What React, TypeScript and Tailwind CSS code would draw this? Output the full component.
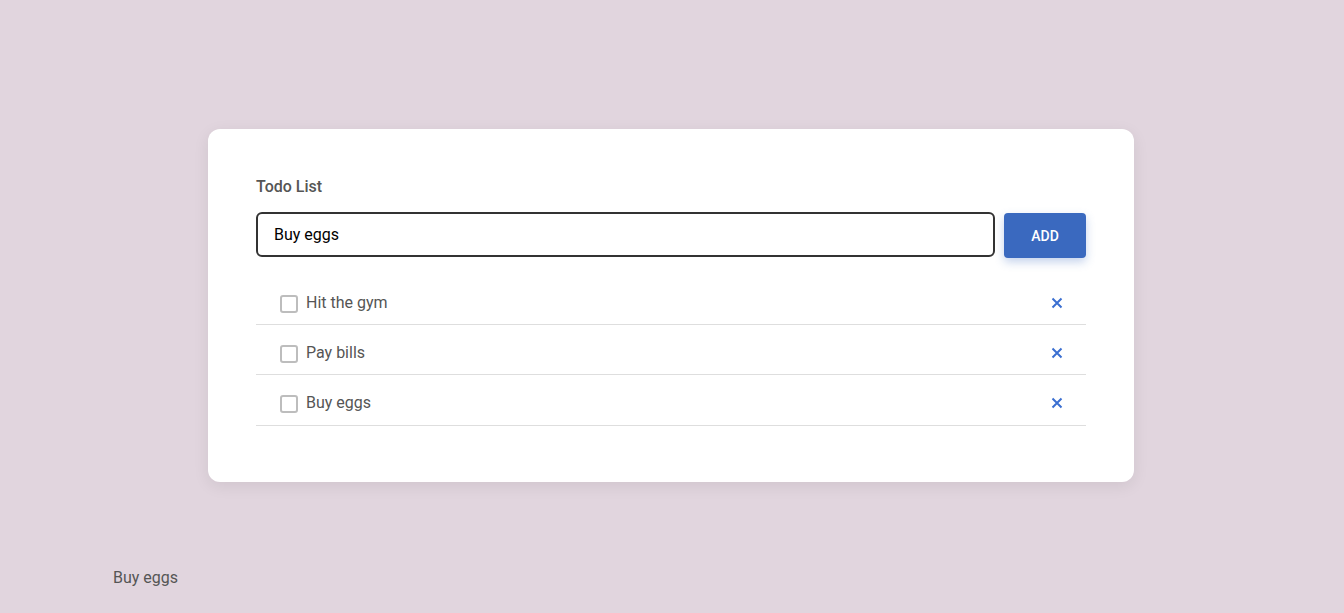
import React from "react";

const items = ["Hit the gym", "Pay bills", "Buy eggs"];

export default function App() {
  return (
    <div className="min-h-screen bg-[#e1d5de] font-['Roboto',sans-serif] pt-[129px]">
      <div className="ml-[208px] w-[926px] rounded-xl bg-white px-12 pt-[47px] pb-[56px] shadow-[0_4px_16px_rgba(0,0,0,0.08)]">
        <div className="text-base font-medium leading-[22px] text-[#555]">Todo List</div>
        <div className="mt-[14px] flex gap-[9px]">
          <div className="flex h-[45px] flex-1 items-center rounded-md border-2 border-[#333] pl-4 text-base text-black">
            Buy eggs
          </div>
          <button className="mt-px flex h-[45px] w-[82px] items-center justify-center rounded bg-[#3a69bf] text-sm font-medium text-white shadow-[0_4px_10px_rgba(58,105,191,0.3)]">
            ADD
          </button>
        </div>
        <ul className="mt-[17px]">
          {items.map((t, i) => (
            <li
              key={t}
              className={`flex items-center border-b border-[#dedede] pl-6 pr-[23px] pt-[6px] ${i === 2 ? "h-[51px]" : "h-[50px]"}`}
            >
              <span className="mt-[2px] h-[18px] w-[18px] rounded-[3px] border-2 border-[#bdbdbd]" />
              <span className="ml-2 flex-1 text-base text-[#555]">{t}</span>
              <svg width="12" height="12" viewBox="0 0 12 12" className="text-[#3b6fd1]">
                <path d="M1.5 1.5 L10.5 10.5 M10.5 1.5 L1.5 10.5" stroke="currentColor" strokeWidth="2" strokeLinecap="butt" />
              </svg>
            </li>
          ))}
        </ul>
      </div>
      <div className="mt-[84px] pl-[113px] text-base leading-6 text-[#555]">Buy eggs</div>
    </div>
  );
}
